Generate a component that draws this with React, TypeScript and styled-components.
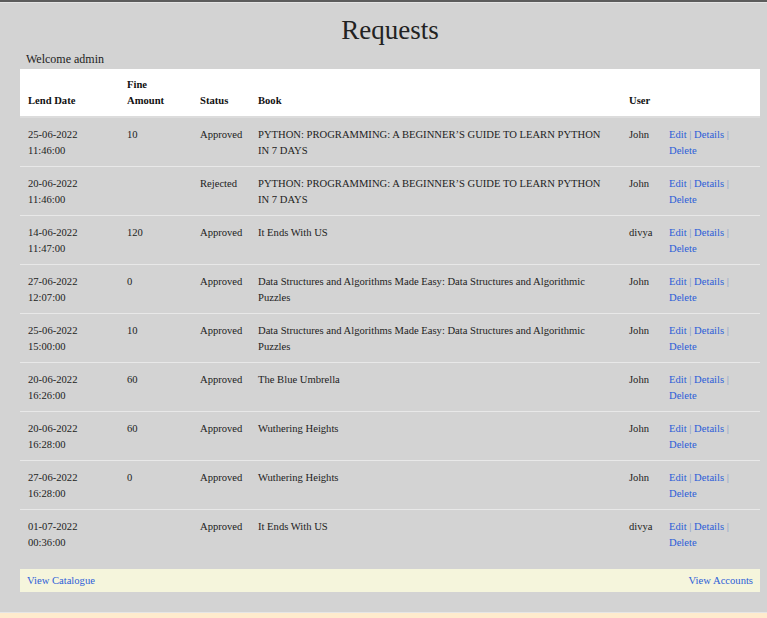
import React from "react";
import styled, { createGlobalStyle } from "styled-components";

const Global = createGlobalStyle`
  html, body { margin: 0; padding: 0; }
  body {
    background: #ffebcd;
    font-family: "Liberation Serif", "Times New Roman", serif;
    color: #222;
  }
`;

const Page = styled.div`
  background: #d3d3d3;
  border-top: 2px solid #5c5c5c;
  border-bottom: 1px solid #e6e6e6;
  box-shadow: inset 0 1px 0 #e4e4e4;
  height: 610px;
  padding: 0 7px 0 20px;
  box-sizing: content-box;
`;

const Title = styled.h1`
  margin: 0;
  padding-top: 13px;
  font-size: 27px;
  font-weight: normal;
  line-height: 31px;
  text-align: center;
  color: #222;
`;

const Welcome = styled.div`
  font-size: 12px;
  line-height: 16px;
  padding: 5px 0 0 6px;
  height: 18px;
  color: #222;
`;

const Table = styled.table`
  width: 740px;
  border-collapse: collapse;
  font-size: 10.6px;
  line-height: 16px;
  table-layout: fixed;
`;

const Head = styled.thead`
  background: #ffffff;
`;

const Th = styled.th<{ $w: number }>`
  width: ${(p) => p.$w}px;
  box-sizing: border-box;
  text-align: left;
  vertical-align: bottom;
  padding: 8px 8px 7px;
  font-weight: bold;
  color: #111;
  border-bottom: 2px solid #dcdcdc;
`;

const Row = styled.tr`
  border-top: 1px solid #e8e8e8;
  &:first-child { border-top: none; }
`;

const Td = styled.td`
  padding: 9px 8px 7px;
  vertical-align: top;
  color: #222;
`;

const Link = styled.a`
  color: #2c5ed8;
  text-decoration: none;
  cursor: pointer;
`;

const Pipe = styled.span`
  color: #7b93c9;
`;

const Footer = styled.div`
  margin-top: 11px;
  width: 740px;
  height: 23px;
  background: #f5f5dc;
  display: flex;
  justify-content: space-between;
  align-items: center;
  padding: 0 7px;
  box-sizing: border-box;
  font-size: 10.6px;
  line-height: 16px;
`;

type Req = { date: string; time: string; fine: string; status: string; book: string; user: string };

const rows: Req[] = [
  { date: "25-06-2022", time: "11:46:00", fine: "10", status: "Approved", book: "PYTHON: PROGRAMMING: A BEGINNER’S GUIDE TO LEARN PYTHON IN 7 DAYS", user: "John" },
  { date: "20-06-2022", time: "11:46:00", fine: "", status: "Rejected", book: "PYTHON: PROGRAMMING: A BEGINNER’S GUIDE TO LEARN PYTHON IN 7 DAYS", user: "John" },
  { date: "14-06-2022", time: "11:47:00", fine: "120", status: "Approved", book: "It Ends With US", user: "divya" },
  { date: "27-06-2022", time: "12:07:00", fine: "0", status: "Approved", book: "Data Structures and Algorithms Made Easy: Data Structures and Algorithmic Puzzles", user: "John" },
  { date: "25-06-2022", time: "15:00:00", fine: "10", status: "Approved", book: "Data Structures and Algorithms Made Easy: Data Structures and Algorithmic Puzzles", user: "John" },
  { date: "20-06-2022", time: "16:26:00", fine: "60", status: "Approved", book: "The Blue Umbrella", user: "John" },
  { date: "20-06-2022", time: "16:28:00", fine: "60", status: "Approved", book: "Wuthering Heights", user: "John" },
  { date: "27-06-2022", time: "16:28:00", fine: "0", status: "Approved", book: "Wuthering Heights", user: "John" },
  { date: "01-07-2022", time: "00:36:00", fine: "", status: "Approved", book: "It Ends With US", user: "divya" },
];

export default function App() {
  return (
    <>
      <Global />
      <Page>
        <Title>Requests</Title>
        <Welcome>Welcome admin</Welcome>
        <Table>
          <Head>
            <tr>
              <Th $w={99}>Lend Date</Th>
              <Th $w={73}>Fine<br />Amount</Th>
              <Th $w={58}>Status</Th>
              <Th $w={371}>Book</Th>
              <Th $w={40}>User</Th>
              <Th $w={99}></Th>
            </tr>
          </Head>
          <tbody>
            {rows.map((r, i) => (
              <Row key={i}>
                <Td>{r.date}<br />{r.time}</Td>
                <Td>{r.fine}</Td>
                <Td>{r.status}</Td>
                <Td>{r.book}</Td>
                <Td>{r.user}</Td>
                <Td>
                  <Link>Edit</Link> <Pipe>|</Pipe> <Link>Details</Link> <Pipe>|</Pipe> <Link>Delete</Link>
                </Td>
              </Row>
            ))}
          </tbody>
        </Table>
        <Footer>
          <Link>View Catalogue</Link>
          <Link>View Accounts</Link>
        </Footer>
      </Page>
    </>
  );
}
